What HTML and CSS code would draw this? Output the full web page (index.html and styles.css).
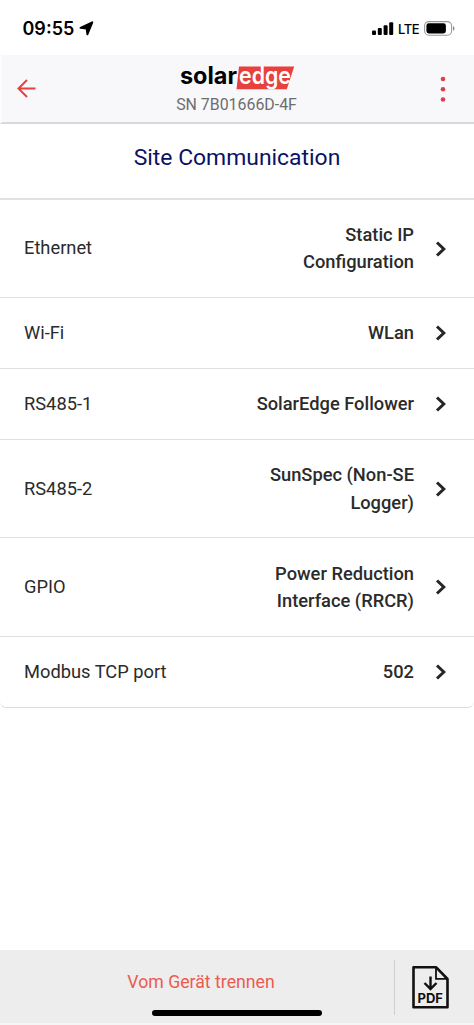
FILE: index.html
```html
<!DOCTYPE html>
<html lang="en">
<head>
<meta charset="utf-8">
<title>Site Communication</title>
<link rel="stylesheet" href="styles.css">
</head>
<body>
<div class="screen">
  <div class="status">
    <div class="clock"><span>09:55</span>
      <svg width="15" height="15" viewBox="0 0 15 15"><path d="M13.300 1.300 8.400 13.300 7.600 7.500 1.500 6.900Z" fill="#000" stroke="#000" stroke-width="1.900" stroke-linejoin="round"/></svg>
    </div>
    <div class="signal">
      <svg width="22" height="14" viewBox="0 0 22 14"><rect x="0" y="8.500" width="4" height="4.500" rx="1"/><rect x="5.800" y="6" width="4" height="7" rx="1"/><rect x="11.600" y="3.200" width="4" height="9.800" rx="1"/><rect x="17.200" y="0.200" width="4" height="12.800" rx="1"/></svg>
      <span class="lte">LTE</span>
      <svg width="31" height="15" viewBox="0 0 31 15"><rect x=".6" y=".6" width="27" height="13.600" rx="4.200" fill="none" stroke="#999" stroke-width="1.100"/><rect x="2.400" y="2.300" width="19.500" height="10.200" rx="2.400"/><path d="M29 5q1.500.8 1.500 2.400t-1.500 2.400Z" fill="#888"/></svg>
    </div>
  </div>
  <header class="header">
    <svg class="back" width="20" height="20" viewBox="0 0 20 20" fill="none" stroke="#e8403f" stroke-width="2"><path d="M18.500 10.500H1.800M10 2 1.500 10.500 10 19"/></svg>
    <div class="brand">
      <svg class="logo" width="118" height="38" viewBox="0 -8 118 38"><path d="M62 1.500H117.200L109.800 24.300H59.500Z" fill="#e8403c"/><text class="logo-solar" x="3" y="18.800" textLength="57" lengthAdjust="spacingAndGlyphs">solar</text><text class="logo-edge" x="62" y="18.800" textLength="52" lengthAdjust="spacingAndGlyphs">edge</text></svg>
      <div class="serial">SN 7B01666D-4F</div>
    </div>
    <svg class="more" width="6" height="26" viewBox="0 0 6 26" fill="#dc3f48"><circle cx="3" cy="3" r="2.300"/><circle cx="3" cy="13.200" r="2.300"/><circle cx="3" cy="23.500" r="2.300"/></svg>
  </header>
  <h1 class="title">Site Communication</h1>
  <main class="list">
    <div class="row"><span class="name">Ethernet</span><span class="value">Static IP<br>Configuration</span><svg class="chev" viewBox="0 0 12 18"><path d="M2 2.500 8.800 9 2 15.500"/></svg></div>
    <div class="row"><span class="name">Wi-Fi</span><span class="value">WLan</span><svg class="chev" viewBox="0 0 12 18"><path d="M2 2.500 8.800 9 2 15.500"/></svg></div>
    <div class="row"><span class="name">RS485-1</span><span class="value">SolarEdge Follower</span><svg class="chev" viewBox="0 0 12 18"><path d="M2 2.500 8.800 9 2 15.500"/></svg></div>
    <div class="row"><span class="name">RS485-2</span><span class="value">SunSpec (Non-SE<br>Logger)</span><svg class="chev" viewBox="0 0 12 18"><path d="M2 2.500 8.800 9 2 15.500"/></svg></div>
    <div class="row"><span class="name">GPIO</span><span class="value">Power Reduction<br>Interface (RRCR)</span><svg class="chev" viewBox="0 0 12 18"><path d="M2 2.500 8.800 9 2 15.500"/></svg></div>
    <div class="row"><span class="name">Modbus TCP port</span><span class="value">502</span><svg class="chev" viewBox="0 0 12 18"><path d="M2 2.500 8.800 9 2 15.500"/></svg></div>
  </main>
  <footer class="footer">
    <div class="disconnect">Vom Gerät trennen</div>
    <div class="pdf">
      <svg width="40" height="48" viewBox="0 0 40 48"><path d="M2.500 2.200H25L36.500 14V42.200H2.500Z" fill="none" stroke="#111" stroke-width="2.600" stroke-linejoin="round"/><path d="M25 3V13.800H36" fill="none" stroke="#111" stroke-width="1.800"/><path d="M19.500 11.500V23.500M13.500 18 19.500 24 25.500 18" fill="none" stroke="#111" stroke-width="2.400"/><text class="pdf-text" x="6.500" y="37.800" textLength="25.500" lengthAdjust="spacingAndGlyphs">PDF</text></svg>
    </div>
    <div class="home"></div>
  </footer>
</div>
</body>
</html>
```
FILE: styles.css
```css
* { box-sizing: border-box; }
body { margin: 0; background: #fff; font-family: Roboto, sans-serif; color: #2b2b2b; }
.screen { width: 474px; height: 1025px; display: flex; flex-direction: column; overflow: hidden; }
.status { height: 55px; flex: none; display: flex; justify-content: space-between; padding: 18px 19px 0 22.500px; color: #000; font-family: Inter, sans-serif; }
.clock { display: flex; gap: 5px; height: 21px; align-items: center; font-size: 18px; font-weight: 600; }
.signal { display: flex; height: 21px; align-items: center; }
.lte { font-size: 13px; font-weight: 500; letter-spacing: -.5px; margin: 0 5px 0 4px; }
.header { height: 69px; flex: none; display: flex; justify-content: space-between; background: #f8f8fb; border-bottom: 2px solid #d9d9dc; border-left: 2px solid #fcfcfd; padding: 0 28px 0 15px; }
.back { margin-top: 23px; }
.more { margin-top: 21px; }
.brand { display: flex; flex-direction: column; align-items: center; padding-top: 2px; margin-right: 4px; }
.logo { flex: none; }
.logo-solar, .logo-edge { font: 700 24px Inter, sans-serif; }
.logo-solar { fill: #000; }
.logo-edge { fill: #fff; font-weight: 600; }
.serial { font-size: 15.900px; line-height: 20px; color: #6d6d70; }
.title { margin: 0; height: 75.600px; flex: none; border-bottom: 2px solid #e1e1e1; text-align: center; font-size: 22.900px; line-height: 67.500px; font-weight: 400; color: #0b1262; }
.list { border-radius: 0 0 6px 6px; border-bottom: 1px solid #dcdcdc; }
.row { display: flex; align-items: center; padding: 21.200px 27px 21.400px 24px; font-size: 18.300px; line-height: 27.400px; border-bottom: 1px solid #e0e0e0; }
.row:last-child { border-bottom: 0; }
.name { flex: 1; }
.value { text-align: right; font-weight: 500; }
.chev { width: 12px; height: 18px; margin: 1px 0 0 21px; fill: none; stroke: #262626; stroke-width: 3; }
.footer { position: relative; height: 75px; margin-top: auto; flex: none; display: flex; background: #ededed; border-bottom: 2px solid #f5f5f5; }
.disconnect { width: 394px; padding: 0 0 0 8px; text-align: center; color: #ec5b50; font-size: 17.700px; line-height: 65px; }
.pdf { flex: 1; margin: 10px 0 8px; border-left: 1px solid #cfcfcf; padding: 5px 0 0 16px; }
.pdf-text { font: 700 13px Inter, sans-serif; fill: #111; }
.home { position: absolute; left: 152px; bottom: 7px; width: 170px; height: 6px; border-radius: 3px; background: #000; }
```
